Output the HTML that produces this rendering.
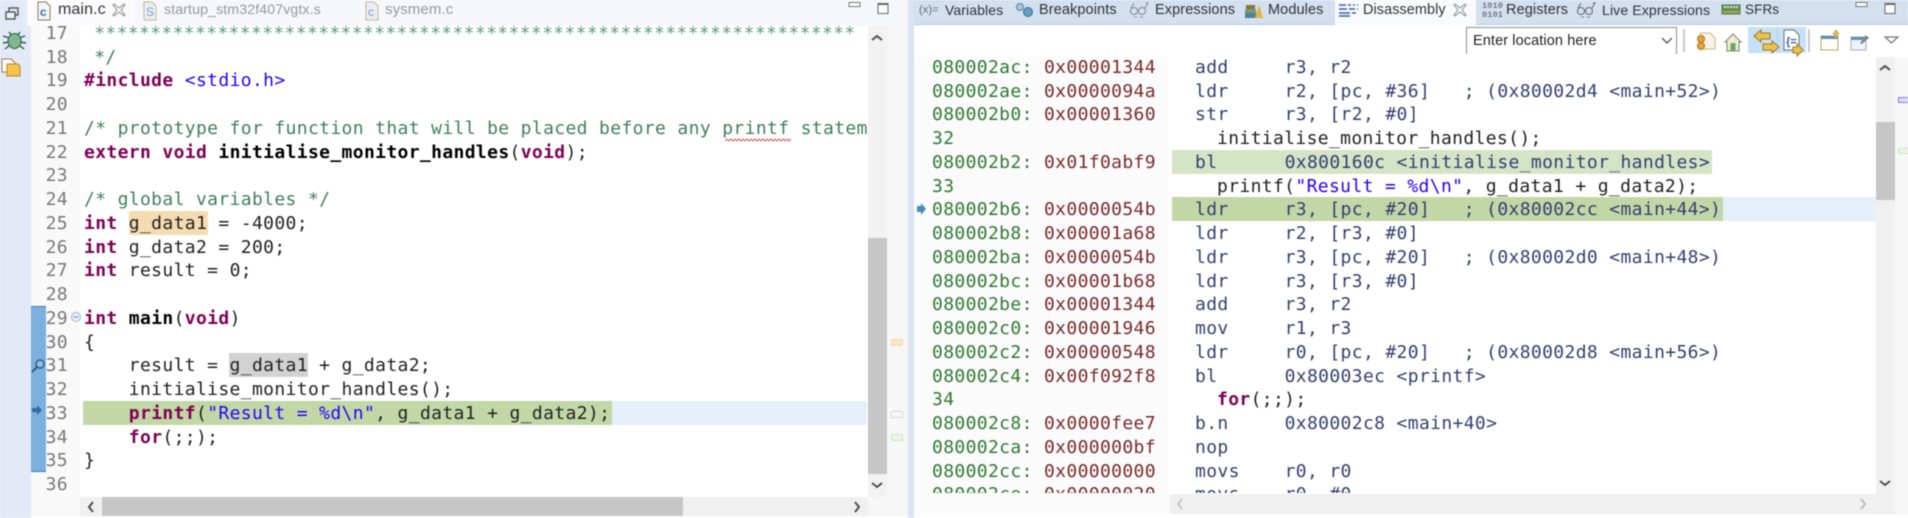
<!DOCTYPE html>
<html><head><meta charset="utf-8"><style>
html,body{margin:0;padding:0;width:1908px;height:518px;overflow:hidden;background:#fff}
#p{position:absolute;left:0;top:0;width:1908px;height:518px;overflow:hidden;background:#fff;filter:blur(.45px);font-family:"DejaVu Sans Mono","Liberation Mono",monospace}
.a{position:absolute}
.c{position:absolute;height:24px;line-height:24px;margin-top:1px;white-space:pre;font-size:18px;letter-spacing:.36px;color:#222}
.t{position:absolute;font-family:"Liberation Sans",sans-serif;font-size:15px;line-height:20px;height:20px;top:0;white-space:pre;color:#333;letter-spacing:.1px}
.n{position:absolute;left:31px;width:37px;text-align:right;height:24px;line-height:24px;margin-top:1px;font-size:18px;letter-spacing:.36px;color:#787878}
b{color:#7f0055;font-weight:bold}
b.k{color:#000}
i{font-style:normal;color:#3f7f5f}
u{text-decoration:none;color:#2a00ff}
.g{color:#2f7a32}.h{color:#7a2a2a}.s{color:#343f72}.m{color:#343f72}
</style></head><body><div id="p">

<!-- backgrounds -->
<div class="a" style="left:0;top:0;width:31px;height:518px;background:#e3e9f6"></div>
<div class="a" style="left:27px;top:0;width:881px;height:26px;background:#f6f7fa"></div>
<div class="a" style="left:27px;top:0;width:108px;height:26px;background:#fff;opacity:.5"></div>
<div class="a" style="left:31px;top:26px;width:49px;height:490px;background:#f9f9f9"></div>
<div class="a" style="left:868px;top:26px;width:40px;height:490px;background:#f7f7f7"></div>
<div class="a" style="left:868px;top:26px;width:19px;height:471px;background:#f2f2f2"></div>
<div class="a" style="left:908px;top:0;width:6px;height:518px;background:#dbe3f3"></div>

<!-- left rail icons -->
<svg class="a" style="left:0;top:0" width="28" height="80">
<rect x="9" y="8" width="9" height="7" fill="none" stroke="#555" stroke-width="1.4"/><rect x="6" y="12" width="9" height="7" fill="#eef" stroke="#555" stroke-width="1.4"/>
<g stroke="#2f5c45" stroke-width="1.4" fill="none"><path d="M3 36l6 2M3 43l6-1M5 49l5-4M9 32l3 4M20 32l-3 4M25 36l-6 2M26 43l-6-1M24 49l-5-4"/></g>
<ellipse cx="14.500" cy="41" rx="6.500" ry="7.500" fill="#7fb88f" stroke="#2f5c45"/>
<path d="M2 59h9l4 4v9H2z" fill="#fff" stroke="#a0764a"/><path d="M7 64h11l2 2v10H7z" fill="#f5c24c" stroke="#b8862b"/>
</svg>

<!-- editor tabs -->
<svg class="a" style="left:36px;top:0" width="16" height="22"><path d="M2 2h8l4 4v14H2z" fill="#f4f6fb" stroke="#8a7a55"/><text x="4" y="16" font-family="Liberation Sans" font-size="12" font-weight="bold" fill="#3a6ea5">c</text></svg>
<div class="t" style="left:58px;font-size:16px;color:#333">main.c</div>
<svg class="a" style="left:112px;top:3px" width="14" height="14"><path d="M2 1l5 4 5-4 1 1-4 5 4 5-1 1-5-4-5 4-1-1 4-5-4-5z" fill="#fff" stroke="#8a8a8a"/></svg>
<svg class="a" style="left:142px;top:0" width="16" height="22"><path d="M2 2h8l4 4v14H2z" fill="#e9eef6" stroke="#c5b99c"/><text x="4" y="16" font-family="Liberation Sans" font-size="12" fill="#7f9fc0">S</text></svg>
<div class="t" style="left:164px;font-size:14.200px;color:#9a9a9a">startup_stm32f407vgtx.s</div>
<svg class="a" style="left:364px;top:0" width="16" height="22"><path d="M2 2h8l4 4v14H2z" fill="#e9eef6" stroke="#c5b99c"/><text x="4" y="16" font-family="Liberation Sans" font-size="12" fill="#7f9fc0">c</text></svg>
<div class="t" style="left:385px;color:#9a9a9a">sysmem.c</div>
<svg class="a" style="left:840px;top:0" width="50" height="18"><rect x="9" y="2.500" width="11" height="4" fill="#fff" stroke="#777"/><rect x="38" y="3.500" width="10" height="10" fill="#fff" stroke="#666"/><rect x="38" y="3" width="10" height="2" fill="#666"/></svg>

<!-- selection bar -->
<div class="a" style="left:31px;top:306px;width:15px;height:166px;background:#7cb0de;border-top:1px solid #3b7cc0;border-bottom:1px solid #3b7cc0;box-sizing:border-box"></div>
<svg class="a" style="left:29px;top:358px" width="18" height="60"><circle cx="11" cy="6" r="4" fill="#8cc0e8" stroke="#2d5c88" stroke-width="1.400"/><path d="M8 9l-5 5" stroke="#2d5c88" stroke-width="2"/><path d="M3 50h5v-3l5 5-5 5v-3H3z" fill="#2d6ea8"/></svg>
<svg class="a" style="left:70px;top:311px" width="12" height="12"><circle cx="6" cy="6" r="4.500" fill="#e8eff6" stroke="#9fb6cc"/><path d="M3.500 6h5" stroke="#6f8fae"/></svg>

<!-- highlights -->
<div class="a" style="left:83px;top:401px;width:784px;height:24px;background:#e6f0fb"></div>
<div class="a" style="left:83px;top:401px;width:529px;height:24px;background:#c1d8a6"></div>
<div class="a" style="left:129px;top:211px;width:79px;height:24px;background:#f4dcb0"></div>
<div class="a" style="left:229px;top:353px;width:79px;height:24px;background:#d2d2d2"></div>

<!-- line numbers -->
<div class="n" style="top:21px">17</div><div class="n" style="top:44.74px">18</div><div class="n" style="top:68.48px">19</div><div class="n" style="top:92.22px">20</div><div class="n" style="top:115.96px">21</div><div class="n" style="top:139.7px">22</div><div class="n" style="top:163.44px">23</div><div class="n" style="top:187.18px">24</div><div class="n" style="top:210.92px">25</div><div class="n" style="top:234.66px">26</div><div class="n" style="top:258.4px">27</div><div class="n" style="top:282.14px">28</div><div class="n" style="top:305.88px">29</div><div class="n" style="top:329.62px">30</div><div class="n" style="top:353.36px">31</div><div class="n" style="top:377.1px">32</div><div class="n" style="top:400.84px">33</div><div class="n" style="top:424.58px">34</div><div class="n" style="top:448.32px">35</div><div class="n" style="top:472.06px">36</div>

<!-- code -->
<div class="a" style="left:84px;top:0;width:783px;height:497px;overflow:hidden">
<div class="c" style="top:21px;left:-1px"><i style="color:#5f9a80"> ********************************************************************</i></div>
<div class="c" style="top:44.74px;left:-1px"><i> */</i></div>
<div class="c" style="top:68.48px"><b>#include</b> <u style="color:#2a00ff">&lt;stdio.h&gt;</u></div>
<div class="c" style="top:115.96px"><i>/* prototype for function that will be placed before any printf statement</i></div>
<div class="c" style="top:139.7px"><b>extern</b> <b>void</b> <b class="k">initialise_monitor_handles</b>(<b>void</b>);</div>
<div class="c" style="top:187.18px"><i>/* global variables */</i></div>
<div class="c" style="top:210.92px"><b>int</b> g_data1 = -4000;</div>
<div class="c" style="top:234.66px"><b>int</b> g_data2 = 200;</div>
<div class="c" style="top:258.4px"><b>int</b> result = 0;</div>
<div class="c" style="top:305.88px"><b>int</b> <b class="k">main</b>(<b>void</b>)</div>
<div class="c" style="top:329.62px">{</div>
<div class="c" style="top:353.36px">    result = g_data1 + g_data2;</div>
<div class="c" style="top:377.1px">    initialise_monitor_handles();</div>
<div class="c" style="top:400.84px">    <b>printf</b>(<u>"Result = %d\n"</u>, g_data1 + g_data2);</div>
<div class="c" style="top:424.58px">    <b>for</b>(;;);</div>
<div class="c" style="top:448.32px">}</div>
</div>
<svg class="a" style="left:725px;top:138px" width="70" height="5"><path d="M0 3l2-2 2 2 2-2 2 2 2-2 2 2 2-2 2 2 2-2 2 2 2-2 2 2 2-2 2 2 2-2 2 2 2-2 2 2 2-2 2 2 2-2 2 2 2-2 2 2 2-2 2 2 2-2 2 2 2-2 2 2 2-2 2 2 2-2" fill="none" stroke="#e0605a"/></svg>

<!-- left scrollbars -->
<div class="a" style="left:868px;top:238px;width:19px;height:236px;background:#c6c6c6"></div>
<svg class="a" style="left:871px;top:33px" width="12" height="10"><path d="M1 7l5-4 5 4" fill="none" stroke="#505050" stroke-width="2"/></svg>
<svg class="a" style="left:871px;top:481px" width="12" height="10"><path d="M1 2l5 4 5-4" fill="none" stroke="#505050" stroke-width="2"/></svg>
<div class="a" style="left:80px;top:497px;width:788px;height:19px;background:#f0f0f0"></div>
<div class="a" style="left:102px;top:497px;width:581px;height:19px;background:#c6c6c6"></div>
<svg class="a" style="left:86px;top:501px" width="10" height="12"><path d="M7 1L3 6l4 5" fill="none" stroke="#505050" stroke-width="2"/></svg>
<svg class="a" style="left:852px;top:501px" width="10" height="12"><path d="M3 1l4 5-4 5" fill="none" stroke="#505050" stroke-width="2"/></svg>
<div class="a" style="left:891px;top:339px;width:10px;height:5px;background:#f8e6c4;border:1px solid #f0d9a8"></div>
<div class="a" style="left:891px;top:411px;width:10px;height:5px;background:#f8f8f8;border:1px solid #d8d8d8"></div>
<div class="a" style="left:891px;top:434px;width:10px;height:5px;background:#eef4e4;border:1px solid #d5e2c4"></div>

<!-- right tab strip -->
<div class="a" style="left:914px;top:0;width:994px;height:24px;background:#d2e0f0;border-bottom:1px solid #b9c9dc"></div>
<div class="a" style="left:1335px;top:0;width:141px;height:25px;background:#f8fafc"></div>
<div class="t" style="left:919px;font-size:11px;color:#666">(x)=</div>
<div class="t" style="left:945px;font-size:14px">Variables</div>
<svg class="a" style="left:1014px;top:1px" width="20" height="20"><circle cx="6" cy="6" r="3.500" fill="#a9c4dc" stroke="#5d7f9f"/><circle cx="14" cy="11" r="4.500" fill="#5f9fbf" stroke="#3f6f8f"/></svg>
<div class="t" style="left:1039px;font-size:14.500px">Breakpoints</div>
<svg class="a" style="left:1128px;top:1px" width="22" height="20" fill="none" stroke="#888"><circle cx="6" cy="10" r="3.500"/><circle cx="14" cy="10" r="3.500"/><path d="M3 7l3-5M17 7l3-5h-2"/><path d="M6 16h3M12 16h3" stroke="#999"/></svg>
<div class="t" style="left:1155px;font-size:14.500px">Expressions</div>
<svg class="a" style="left:1243px;top:1px" width="22" height="20"><rect x="2" y="12" width="12" height="5" fill="#4f7f9f"/><rect x="2" y="8" width="11" height="4" fill="#6fa06f"/><rect x="3" y="4" width="9" height="4" fill="#8f6f3f"/><path d="M12 17l4-13 4 13z" fill="#e8b040"/></svg>
<div class="t" style="left:1268px;font-size:14.500px">Modules</div>
<svg class="a" style="left:1338px;top:2px" width="22" height="16"><path d="M1 3h7M10 3h3M15 3h2M19 3h1M1 7h8M11 7h6M19 7h1M1 11h11M1 14h11M14 11h4" stroke="#3b5ea8" stroke-width="1.600"/></svg>
<div class="t" style="left:1363px;font-size:14.400px">Disassembly</div>
<svg class="a" style="left:1453px;top:3px" width="14" height="14"><path d="M2 1l5 4 5-4 1 1-4 5 4 5-1 1-5-4-5 4-1-1 4-5-4-5z" fill="#fff" stroke="#8a8a8a"/></svg>
<div class="a" style="left:1482px;top:2px;width:20px;font:8.500px/8.500px 'Liberation Mono',monospace;color:#778;letter-spacing:.2px;font-weight:bold">1010<br>0101</div>
<div class="t" style="left:1506px;font-size:14.500px">Registers</div>
<svg class="a" style="left:1575px;top:1px" width="22" height="20" fill="none" stroke="#666"><circle cx="6" cy="10" r="3.500"/><circle cx="14" cy="10" r="3.500"/><path d="M3 7l3-5M17 7l3-5h-2"/><path d="M6 16h3M12 16h3" stroke="#888"/></svg>
<div class="t" style="left:1602px;font-size:14.100px">Live Expressions</div>
<svg class="a" style="left:1721px;top:4px" width="20" height="12"><rect x="1" y="1" width="18" height="9" fill="#5f8f5f" stroke="#4f7f3f"/><path d="M3 3h14" stroke="#d8e8c8" stroke-width="2" stroke-dasharray="2 1"/><path d="M2 8h16" stroke="#c0a040" stroke-width="2"/></svg>
<div class="t" style="left:1745px;font-size:13.500px;top:0">SFRs</div>
<svg class="a" style="left:1850px;top:0" width="50" height="18"><rect x="6" y="2.500" width="11" height="4" fill="#fff" stroke="#777"/><rect x="35" y="3.500" width="10" height="10" fill="#fff" stroke="#666"/><rect x="35" y="3" width="10" height="2" fill="#666"/></svg>

<!-- toolbar -->
<div class="a" style="left:1466px;top:27px;width:211px;height:27px;box-sizing:border-box;background:#fff;border:1px solid #8c8c8c;border-bottom:none"></div>
<div class="t" style="left:1473px;top:31px;font-size:14.500px;color:#222">Enter location here</div>
<svg class="a" style="left:1660px;top:36px" width="14" height="10"><path d="M2 2l5 5 5-5" fill="none" stroke="#555" stroke-width="1.300"/></svg>
<div class="a" style="left:1683px;top:29px;width:2px;height:23px;background:#c8c8c8"></div>
<div class="a" style="left:1748px;top:27px;width:29px;height:26px;background:#c7e0f6"></div>
<div class="a" style="left:1777px;top:27px;width:29px;height:26px;background:#c7e0f6;border-left:1px solid #aed0ee;box-sizing:border-box"></div>
<div class="a" style="left:1808px;top:29px;width:2px;height:23px;background:#c8c8c8"></div>
<svg class="a" style="left:1680px;top:20px" width="228" height="40">
<path d="M20 13h10l5 5v11H20z" fill="#f8f3e4" stroke="#c9b88f"/><circle cx="21" cy="19" r="3.500" fill="#e8a63a" stroke="#a87420"/><circle cx="21" cy="26" r="3.500" fill="#e8a63a" stroke="#a87420"/>
<path d="M45 22l8-8 8 8h-2v9H47v-9z" fill="#f2ead4" stroke="#7c8a6a"/><rect x="50.500" y="23" width="5" height="8" fill="#6fa860"/>
<path d="M74 16l7-6v3h9v6h-9v3z" fill="#f0c24a" stroke="#9a7a2a"/><path d="M92 33v-3h-9v-6h9v-3l7 6z" fill="#f0c24a" stroke="#9a7a2a"/>
<path d="M104 10h10l5 5v15h-15z" fill="#fdfdf8" stroke="#707070"/><text x="106" y="25" font-family="Liberation Sans" font-size="11" font-weight="bold" fill="#3a5ea8">{=</text><path d="M113 27h4v-3l6 6-6 6v-3h-4z" fill="#f0c24a" stroke="#9a7a2a"/>
<rect x="141" y="16" width="17" height="14" fill="#fffdf0" stroke="#b0a680"/><rect x="141" y="16" width="17" height="3" fill="#5f8fc0"/><path d="M155 18v-4h-2l3-4 3 4h-2v4z" fill="#f0c24a" stroke="#a07f2a" stroke-width=".6"/>
<rect x="171" y="17" width="15" height="13" fill="#eef3fa" stroke="#9fb2c8"/><rect x="171" y="17" width="15" height="3" fill="#5f8fc0"/><path d="M180 23l6-8 3 3-7 6z" fill="#888"/>
<path d="M205 17h13l-6.500 6z" fill="#fff" stroke="#777" stroke-width="1.200"/>
</svg>

<!-- disassembly -->
<div class="a" style="left:914px;top:57px;width:254px;height:459px;background:#fbfbfb"></div>
<div class="a" style="left:1172px;top:150px;width:540px;height:24px;background:#d5e4c5"></div>
<div class="a" style="left:1172px;top:197px;width:704px;height:24px;background:#e6f0fb"></div>
<div class="a" style="left:1172px;top:197px;width:551px;height:24px;background:#c1d8a6"></div>
<svg class="a" style="left:916px;top:203px" width="12" height="12"><path d="M1 3h4V0l5 6-5 6V9H1z" fill="#4a8ac0"/></svg>

<div class="a" style="left:0;top:0;width:1876px;height:493px;overflow:hidden">
<div class="c" style="left:932px;top:55px"><span class="g">080002ac:</span> <span class="h">0x00001344</span></div><div class="c m" style="left:1195px;top:55px;color:#343f72">add     r3, r2</div>
<div class="c" style="left:932px;top:78.74px"><span class="g">080002ae:</span> <span class="h">0x0000094a</span></div><div class="c m" style="left:1195px;top:78.74px;color:#343f72">ldr     r2, [pc, #36]   ; (0x80002d4 &lt;main+52&gt;)</div>
<div class="c" style="left:932px;top:102.48px"><span class="g">080002b0:</span> <span class="h">0x00001360</span></div><div class="c" style="left:1195px;top:102.48px;color:#343f72">str     r3, [r2, #0]</div>
<div class="c g" style="left:932px;top:126.22px;color:#2f7a32">32</div><div class="c" style="left:1217px;top:126.22px">initialise_monitor_handles();</div>
<div class="c" style="left:932px;top:149.96px"><span class="g">080002b2:</span> <span class="h">0x01f0abf9</span></div><div class="c" style="left:1195px;top:149.96px;color:#343f72">bl      0x800160c &lt;initialise_monitor_handles&gt;</div>
<div class="c g" style="left:932px;top:173.7px;color:#2f7a32">33</div><div class="c" style="left:1217px;top:173.7px">printf(<u>"Result = %d\n"</u>, g_data1 + g_data2);</div>
<div class="c" style="left:932px;top:197.44px"><span class="g">080002b6:</span> <span class="h">0x0000054b</span></div><div class="c" style="left:1195px;top:197.44px;color:#343f72">ldr     r3, [pc, #20]   ; (0x80002cc &lt;main+44&gt;)</div>
<div class="c" style="left:932px;top:221.18px"><span class="g">080002b8:</span> <span class="h">0x00001a68</span></div><div class="c" style="left:1195px;top:221.18px;color:#343f72">ldr     r2, [r3, #0]</div>
<div class="c" style="left:932px;top:244.92px"><span class="g">080002ba:</span> <span class="h">0x0000054b</span></div><div class="c" style="left:1195px;top:244.92px;color:#343f72">ldr     r3, [pc, #20]   ; (0x80002d0 &lt;main+48&gt;)</div>
<div class="c" style="left:932px;top:268.66px"><span class="g">080002bc:</span> <span class="h">0x00001b68</span></div><div class="c" style="left:1195px;top:268.66px;color:#343f72">ldr     r3, [r3, #0]</div>
<div class="c" style="left:932px;top:292.4px"><span class="g">080002be:</span> <span class="h">0x00001344</span></div><div class="c" style="left:1195px;top:292.4px;color:#343f72">add     r3, r2</div>
<div class="c" style="left:932px;top:316.14px"><span class="g">080002c0:</span> <span class="h">0x00001946</span></div><div class="c" style="left:1195px;top:316.14px;color:#343f72">mov     r1, r3</div>
<div class="c" style="left:932px;top:339.88px"><span class="g">080002c2:</span> <span class="h">0x00000548</span></div><div class="c" style="left:1195px;top:339.88px;color:#343f72">ldr     r0, [pc, #20]   ; (0x80002d8 &lt;main+56&gt;)</div>
<div class="c" style="left:932px;top:363.62px"><span class="g">080002c4:</span> <span class="h">0x00f092f8</span></div><div class="c" style="left:1195px;top:363.62px;color:#343f72">bl      0x80003ec &lt;printf&gt;</div>
<div class="c g" style="left:932px;top:387.36px;color:#2f7a32">34</div><div class="c" style="left:1217px;top:387.36px"><b>for</b>(;;);</div>
<div class="c" style="left:932px;top:411.1px"><span class="g">080002c8:</span> <span class="h">0x0000fee7</span></div><div class="c" style="left:1195px;top:411.1px;color:#343f72">b.n     0x80002c8 &lt;main+40&gt;</div>
<div class="c" style="left:932px;top:434.84px"><span class="g">080002ca:</span> <span class="h">0x000000bf</span></div><div class="c" style="left:1195px;top:434.84px;color:#343f72">nop</div>
<div class="c" style="left:932px;top:458.58px"><span class="g">080002cc:</span> <span class="h">0x00000000</span></div><div class="c" style="left:1195px;top:458.58px;color:#343f72">movs    r0, r0</div>
<div class="c" style="left:932px;top:482.32px"><span class="g">080002ce:</span> <span class="h">0x00000020</span></div><div class="c" style="left:1195px;top:482.32px;color:#343f72">movs    r0, #0</div>
</div>

<!-- right scrollbars -->
<div class="a" style="left:914px;top:493px;width:256px;height:22px;background:#fbfbfb"></div>
<div class="a" style="left:1170px;top:494px;width:706px;height:20px;background:#f0f0f0"></div>
<div class="a" style="left:1876px;top:57px;width:32px;height:459px;background:#f7f7f7"></div>
<div class="a" style="left:1876px;top:57px;width:19px;height:457px;background:#f0f0f0"></div>
<div class="a" style="left:1876px;top:122px;width:19px;height:78px;background:#c6c6c6"></div>
<svg class="a" style="left:1879px;top:63px" width="12" height="10"><path d="M1 7l5-4 5 4" fill="none" stroke="#505050" stroke-width="2"/></svg>
<svg class="a" style="left:1879px;top:479px" width="12" height="10"><path d="M1 2l5 4 5-4" fill="none" stroke="#505050" stroke-width="2"/></svg>
<svg class="a" style="left:1175px;top:498px" width="10" height="12"><path d="M7 1L3 6l4 5" fill="none" stroke="#c0c0c0" stroke-width="2"/></svg>
<svg class="a" style="left:1858px;top:498px" width="10" height="12"><path d="M3 1l4 5-4 5" fill="none" stroke="#c0c0c0" stroke-width="2"/></svg>
<div class="a" style="left:1898px;top:97px;width:9px;height:4px;background:#dcdcf8;border:1px solid #7f7fdf"></div>
<div class="a" style="left:1898px;top:148px;width:9px;height:4px;background:#eef4e4;border:1px solid #d5e2c4"></div>
<div class="a" style="left:914px;top:515px;width:994px;height:3px;background:#fff"></div>
</div></body></html>
